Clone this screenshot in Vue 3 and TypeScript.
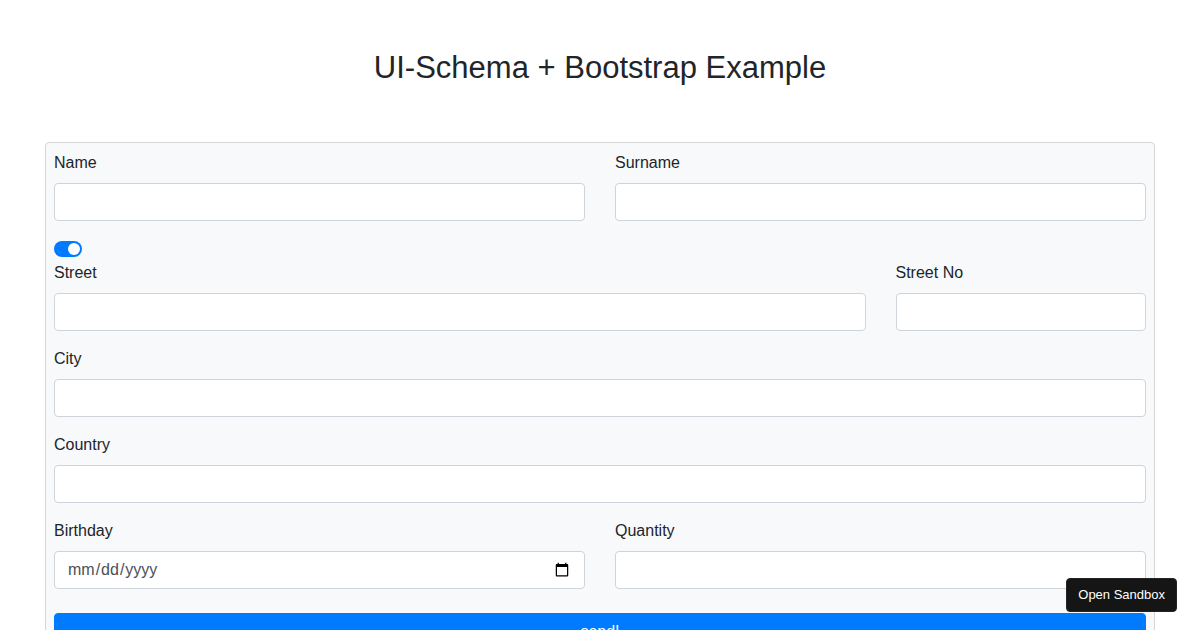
<script setup lang="ts">
import { ref } from 'vue'

interface Field {
  id: string
  label: string
  type: string
  span: string
}

const identity: Field[] = [
  { id: 'name', label: 'Name', type: 'text', span: 'half' },
  { id: 'surname', label: 'Surname', type: 'text', span: 'half' },
]
const details: Field[] = [
  { id: 'street', label: 'Street', type: 'text', span: 'wide' },
  { id: 'street-no', label: 'Street No', type: 'text', span: 'narrow' },
  { id: 'city', label: 'City', type: 'text', span: 'full' },
  { id: 'country', label: 'Country', type: 'text', span: 'full' },
  { id: 'birthday', label: 'Birthday', type: 'date', span: 'half' },
  { id: 'quantity', label: 'Quantity', type: 'number', span: 'half' },
]
const values = ref<Record<string, string>>({})
const showAddress = ref(true)
</script>

<template>
  <main class="page">
    <h1 class="title">UI-Schema + Bootstrap Example</h1>
    <form class="card" @submit.prevent>
      <div class="grid">
        <div v-for="f in identity" :key="f.id" class="group" :class="f.span">
          <label :for="f.id">{{ f.label }}</label>
          <input :id="f.id" v-model="values[f.id]" class="control" :type="f.type" />
        </div>
      </div>
      <div class="switch-row">
        <input v-model="showAddress" class="switch" type="checkbox" role="switch" aria-label="Address" />
      </div>
      <div class="grid">
        <div v-for="f in details" :key="f.id" class="group" :class="f.span">
          <label :for="f.id">{{ f.label }}</label>
          <input :id="f.id" v-model="values[f.id]" class="control" :type="f.type" />
        </div>
      </div>
      <button class="send" type="submit">send!</button>
    </form>
    <button class="sandbox" type="button">Open Sandbox</button>
  </main>
</template>

<style>
body {
  margin: 0;
  background: #fff;
}
html {
  scrollbar-width: none;
}
</style>

<style scoped>
.page,
.page * {
  box-sizing: border-box;
}
.page {
  padding: 48px 45px;
  color: #212529;
  font: 16px/24px "Liberation Sans", Arial, sans-serif;
}
.title {
  margin: 0 0 54px;
  font-size: 31px;
  font-weight: 400;
  line-height: 40px;
  text-align: center;
}
.card {
  padding: 8px;
  border: 1px solid #d4d7da;
  border-radius: 4px;
  background: #f8f9fa;
}
.grid {
  display: grid;
  grid-template-columns: repeat(12, minmax(0, 1fr));
  column-gap: 30px;
  row-gap: 16px;
}
.half {
  grid-column: span 6;
}
.wide {
  grid-column: span 9;
}
.narrow {
  grid-column: span 3;
}
.full {
  grid-column: span 12;
}
.group label {
  display: block;
  margin-bottom: 8px;
}
.control {
  display: block;
  width: 100%;
  height: 38px;
  padding: 6px 12px;
  border: 1px solid #ced4da;
  border-radius: 4px;
  background: #fff;
  color: #495057;
  font: inherit;
}
.switch-row {
  display: flex;
  align-items: center;
  height: 24px;
  margin-top: 16px;
}
.switch {
  display: flex;
  align-items: center;
  width: 28px;
  height: 16px;
  margin: 0;
  padding: 2px;
  border-radius: 8px;
  background: #adb5bd;
  appearance: none;
}
.switch::before {
  width: 12px;
  height: 12px;
  border-radius: 50%;
  background: #fff;
  content: "";
}
.switch:checked {
  justify-content: flex-end;
  background: #007bff;
}
.send {
  display: block;
  width: 100%;
  height: 38px;
  margin-top: 24px;
  padding: 6px 12px;
  border: 1px solid #007bff;
  border-radius: 4px;
  background: #007bff;
  color: #fff;
  font: inherit;
}
.sandbox {
  position: fixed;
  right: 23px;
  bottom: 18px;
  height: 34px;
  padding: 0 11px;
  border: 1px solid #242424;
  border-radius: 4px;
  background: #151515;
  color: #fff;
  font-family: inherit;
  font-size: 13px;
  line-height: 16px;
}
</style>
